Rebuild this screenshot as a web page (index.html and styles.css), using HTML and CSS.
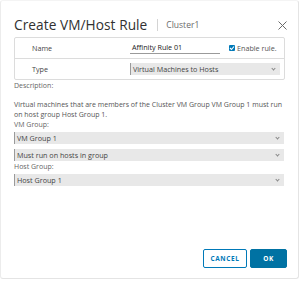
FILE: index.html
```html
<!DOCTYPE html>
<html>
<head>
<meta charset="utf-8">
<link rel="stylesheet" href="styles.css">
</head>
<body>
<div class="dialog">
  <div class="header">
    <h1 class="title">Create VM/Host Rule</h1>
    <span class="sep"></span>
    <span class="subtitle">Cluster1</span>
    <span class="close"><svg width="9" height="9" viewBox="0 0 9 9"><path d="M0.5 0.5 L8.5 8.5 M8.5 0.5 L0.5 8.5" stroke="#6a6a6a" stroke-width="1" fill="none"/></svg></span>
  </div>
  <div class="table">
    <div class="row">
      <div class="label">Name</div>
      <div class="input">Affinity Rule 01</div>
      <label class="check"><span class="box"><svg width="6" height="6" viewBox="0 0 6 6"><path d="M1 3 L2.5 4.5 L5 1.5" stroke="#fff" stroke-width="1.1" fill="none"/></svg></span>Enable rule.</label>
    </div>
    <div class="row">
      <div class="label">Type</div>
      <div class="select narrow">Virtual Machines to Hosts<span class="chev"></span></div>
    </div>
  </div>
  <div class="body">
    <div class="muted desc-label">Description:</div>
    <p class="desc">Virtual machines that are members of the Cluster VM Group VM Group 1 must run on host group Host Group 1.</p>
    <div class="muted field-label">VM Group:</div>
    <div class="select">VM Group 1<span class="chev"></span></div>
    <div class="select gap">Must run on hosts in group<span class="chev"></span></div>
    <div class="muted field-label second">Host Group:</div>
    <div class="select">Host Group 1<span class="chev"></span></div>
  </div>
  <div class="footer">
    <button class="btn cancel">CANCEL</button>
    <button class="btn ok">OK</button>
  </div>
</div>
</body>
</html>
```
FILE: styles.css
```css
* { box-sizing: border-box; }
html, body { margin: 0; padding: 0; background: #fff; }
body { font-family: "Open Sans", "Liberation Sans", sans-serif; color: #565656; width: 300px; height: 281px; }
.dialog {
  width: 299px; height: 279px;
  border: 1px solid #e4e4e4; border-top-color: #f4f4f4; border-left-color: #ececec;
  border-radius: 3px;
  display: flex; flex-direction: column;
  background: #fff;
}
.header { display: flex; align-items: center; padding: 11px 11px 0 13px; height: 36px; }
.title { margin: 0; font-weight: 400; font-size: 13.7px; color: #313131; letter-spacing: 0.05px; line-height: 16px; }
.sep { width: 1px; height: 12px; background: #d4d4d4; margin: 0 8px 0 10px; }
.subtitle { font-size: 8.5px; color: #6b6b6b; }
.close { margin-left: auto; display: flex; padding-top: 2px; }
.table { margin: 0 13px 0 13px; border: 1px solid #dcdcdc; border-radius: 2px; }
.row { display: flex; align-items: center; height: 20px; padding-left: 17px; font-size: 7.2px; }
.row + .row { border-top: 1px solid #dcdcdc; height: 21px; }
.label { width: 98px; color: #454545; }
.input { width: 90px; height: 12px; border-bottom: 1px solid #9a9a9a; color: #222; padding-left: 2px; font-size: 7.2px; line-height: 11px; }
.check { margin-left: 9px; display: flex; align-items: center; color: #555; font-size: 7.2px; }
.box { width: 6px; height: 6px; background: #0079b8; border-radius: 1px; margin-right: 2px; display: flex; }
.body { padding: 1px 14px 0 13px; font-size: 7px; color: #565656; }
.muted { color: #666; }
.desc-label { line-height: 10px; }
.desc { margin: 9px 0 0 0; line-height: 10px; color: #555; }
.field-label { line-height: 9px; margin-bottom: 3px; }
.field-label.second { margin-top: 1px; margin-bottom: 3px; }
.select {
  position: relative; height: 12px; background: #e8e8e8; border-left: 1px solid #9a9a9a;
  padding-left: 2px; line-height: 12px; color: #454545; font-size: 7.2px;
}
.select.gap { margin-top: 5px; }
.select.narrow { width: 150px; }
.chev { position: absolute; right: 5px; top: 4px; width: 3px; height: 3px; border-right: 1px solid #888; border-bottom: 1px solid #888; transform: rotate(45deg); }
.footer { margin-top: auto; display: flex; justify-content: flex-end; gap: 3px; padding: 0 11px 10px 0; }
.btn { height: 19px; font-family: "Open Sans", sans-serif; font-size: 6.5px; font-weight: 700; letter-spacing: 0.6px; border-radius: 2px; padding: 0; }
.cancel { width: 44px; border: 1px solid #0079b8; background: #fff; color: #0079b8; }
.ok { width: 37px; border: 1px solid #0072a3; background: #0072a3; color: #fff; }
```
